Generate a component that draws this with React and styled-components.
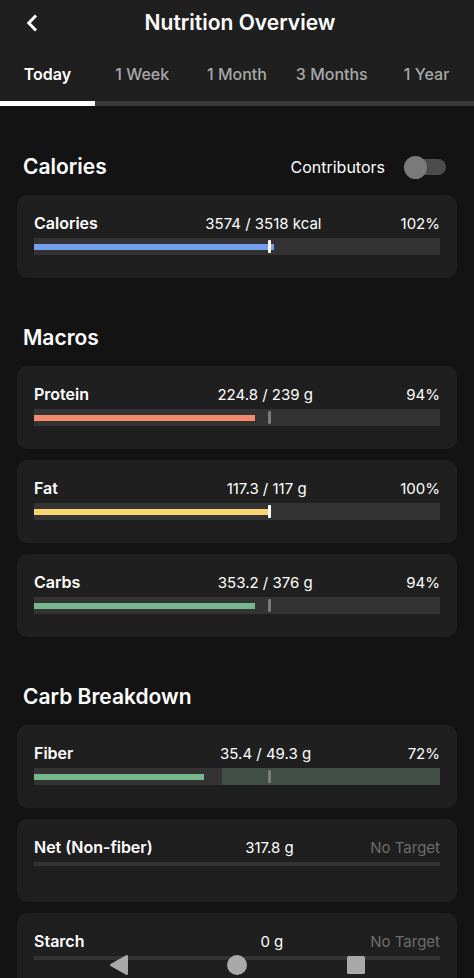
import React, { useState } from 'react';
import styled, { createGlobalStyle } from 'styled-components';

const GlobalStyle = createGlobalStyle`
  * {
    box-sizing: border-box;
  }
  body {
    margin: 0;
    background-color: #131313;
    color: #ffffff;
    font-family: Inter, "Open Sans", sans-serif;
    font-size: 16px;
    line-height: 20px;
  }
  button {
    padding: 0;
    border: none;
    background: none;
    color: inherit;
    font: inherit;
    cursor: pointer;
  }
`;

const Screen = styled.div`
  display: flex;
  flex-direction: column;
  height: 100vh;
  overflow: hidden;
`;

const Header = styled.header`
  flex-shrink: 0;
  background-color: #1f1f1f;
`;

const TitleBar = styled.div`
  display: grid;
  grid-template-columns: 40px 1fr 40px;
  align-items: center;
  height: 46px;
  padding: 0 6px 0 12px;
`;

const BackButton = styled.button`
  display: flex;
  align-items: center;
  justify-content: center;
  height: 40px;
`;

const Title = styled.h1`
  margin: 0;
  font-size: 21px;
  font-weight: 600;
  text-align: center;
`;

const Tabs = styled.nav`
  display: grid;
  grid-template-columns: repeat(5, 1fr);
`;

const Tab = styled.button`
  height: 60px;
  border-bottom: 5px solid ${({ $active }) => ($active ? '#ffffff' : '#3a3a3a')};
  color: ${({ $active }) => ($active ? '#ffffff' : '#a8a8a8')};
  font-size: 16px;
  font-weight: ${({ $active }) => ($active ? 600 : 500)};
  white-space: nowrap;
`;

const Content = styled.main`
  flex: 1;
  min-height: 0;
  padding: 45px 17px 0;
  overflow-y: auto;
  scrollbar-width: none;
`;

const Section = styled.section`
  margin-bottom: 44px;
`;

const SectionHeader = styled.div`
  display: flex;
  align-items: center;
  justify-content: space-between;
  height: 32px;
  margin-bottom: 12px;
  padding: 0 11px 0 6px;
`;

const SectionTitle = styled.h2`
  margin: 0;
  font-size: 21px;
  font-weight: 600;
`;

const SwitchLabel = styled.label`
  display: flex;
  align-items: center;
  gap: 19px;
  cursor: pointer;
`;

const Switch = styled.input`
  appearance: none;
  display: flex;
  align-items: center;
  width: 42px;
  height: 16px;
  margin: 0;
  border-radius: 8px;
  background-color: #4b4b4b;
  cursor: pointer;

  &::before {
    content: '';
    width: 23px;
    height: 23px;
    flex-shrink: 0;
    border-radius: 50%;
    background-color: #7a7a7a;
  }
  &:checked {
    justify-content: flex-end;
  }
`;

const CardList = styled.div`
  display: grid;
  gap: 11px;
`;

const Card = styled.article`
  height: 83px;
  padding: 18px 17px;
  border-radius: 10px;
  background-color: #1f1f1f;
`;

const CardRow = styled.div`
  display: grid;
  grid-template-columns: minmax(0, 13fr) auto minmax(0, 9fr);
  align-items: baseline;
  height: 20px;
  margin-bottom: 5px;
  white-space: nowrap;
`;

const Name = styled.h3`
  margin: 0;
  font-size: 16px;
  font-weight: 600;
`;

const Value = styled.span`
  font-size: 15px;
`;

const Percent = styled.span`
  color: ${({ $muted }) => ($muted ? '#6c6c6c' : '#ffffff')};
  font-size: 15px;
  text-align: right;
`;

const Track = styled.div`
  position: relative;
  display: flex;
  align-items: center;
  height: ${({ $thin }) => ($thin ? 4 : 17)}px;
  background-color: #333333;
`;

const Fill = styled.div`
  position: relative;
  z-index: 1;
  height: 6px;
  background-color: ${({ $color }) => $color};
`;

const Range = styled.div`
  position: absolute;
  top: 0;
  right: 0;
  bottom: 0;
  left: ${({ $from }) => $from}%;
  background-color: #414e45;
`;

const Tick = styled.div`
  position: absolute;
  z-index: 2;
  top: 2px;
  bottom: 2px;
  left: ${({ $at }) => $at}%;
  width: 3px;
  margin-left: -1px;
  border-radius: 1px;
  background-color: ${({ $reached }) => ($reached ? '#ffffff' : '#7b7b7b')};
`;

const SystemBar = styled.div`
  position: fixed;
  right: 0;
  bottom: 0;
  left: 0;
  z-index: 3;
  display: grid;
  grid-template-columns: repeat(3, 1fr);
  height: 27px;
  padding: 0 12.5%;
  color: #a9a9a9;
`;

const SystemButton = styled.button`
  display: flex;
  align-items: center;
  justify-content: center;
`;

// where the target sits along the track, in percent
const TARGET = 58;

const sections = [
  {
    title: 'Calories',
    contributors: true,
    items: [
      { name: 'Calories', value: '3574 / 3518 kcal', percent: 102, color: '#759fee' },
    ],
  },
  {
    title: 'Macros',
    items: [
      { name: 'Protein', value: '224.8 / 239 g', percent: 94, color: '#f38b6d' },
      { name: 'Fat', value: '117.3 / 117 g', percent: 100, color: '#f8d373' },
      { name: 'Carbs', value: '353.2 / 376 g', percent: 94, color: '#78b88f' },
    ],
  },
  {
    title: 'Carb Breakdown',
    items: [
      { name: 'Fiber', value: '35.4 / 49.3 g', percent: 72, color: '#78b88f', rangeFrom: 46.4 },
      { name: 'Net (Non-fiber)', value: '317.8 g' },
      { name: 'Starch', value: '0 g' },
    ],
  },
];

const tabs = ['Today', '1 Week', '1 Month', '3 Months', '1 Year'];

function NutrientCard({ name, value, percent, color, rangeFrom }) {
  const hasTarget = percent !== undefined;
  return (
    <Card>
      <CardRow>
        <Name>{name}</Name>
        <Value>{value}</Value>
        <Percent $muted={!hasTarget}>{hasTarget ? `${percent}%` : 'No Target'}</Percent>
      </CardRow>
      <Track $thin={!hasTarget}>
        {rangeFrom && <Range $from={rangeFrom} />}
        {hasTarget && (
          <>
            <Fill $color={color} style={{ width: `${(percent * TARGET) / 100}%` }} />
            <Tick $at={TARGET} $reached={percent >= 100} />
          </>
        )}
      </Track>
    </Card>
  );
}

function App() {
  const [activeTab, setActiveTab] = useState('Today');
  const [contributors, setContributors] = useState(false);

  return (
    <Screen>
      <GlobalStyle />
      <Header>
        <TitleBar>
          <BackButton aria-label="Back">
            <svg width="12" height="18" viewBox="0 0 12 18" fill="none" stroke="currentColor" strokeWidth="3">
              <path d="M10 1.5 2.8 9l7.2 7.5" />
            </svg>
          </BackButton>
          <Title>Nutrition Overview</Title>
        </TitleBar>
        <Tabs>
          {tabs.map((tab) => (
            <Tab key={tab} $active={tab === activeTab} onClick={() => setActiveTab(tab)}>
              {tab}
            </Tab>
          ))}
        </Tabs>
      </Header>
      <Content>
        {sections.map((section) => (
          <Section key={section.title}>
            <SectionHeader>
              <SectionTitle>{section.title}</SectionTitle>
              {section.contributors && (
                <SwitchLabel>
                  Contributors
                  <Switch
                    type="checkbox"
                    role="switch"
                    checked={contributors}
                    onChange={(e) => setContributors(e.target.checked)}
                  />
                </SwitchLabel>
              )}
            </SectionHeader>
            <CardList>
              {section.items.map((item) => (
                <NutrientCard key={item.name} {...item} />
              ))}
            </CardList>
          </Section>
        ))}
      </Content>
      <SystemBar>
        <SystemButton aria-label="System back">
          <svg width="20" height="22" viewBox="0 0 20 22" fill="currentColor">
            <path d="M17 1.2 1.6 10q-1.4 1 0 2L17 20.8q2 .8 2-1.2V2.4q0-2-2-1.2Z" />
          </svg>
        </SystemButton>
        <SystemButton aria-label="System home">
          <svg width="20" height="20" viewBox="0 0 20 20" fill="currentColor">
            <circle cx="10" cy="10" r="10" />
          </svg>
        </SystemButton>
        <SystemButton aria-label="Recent apps">
          <svg width="18" height="18" viewBox="0 0 18 18" fill="currentColor">
            <rect width="18" height="18" rx="1.5" />
          </svg>
        </SystemButton>
      </SystemBar>
    </Screen>
  );
}

export default App;
